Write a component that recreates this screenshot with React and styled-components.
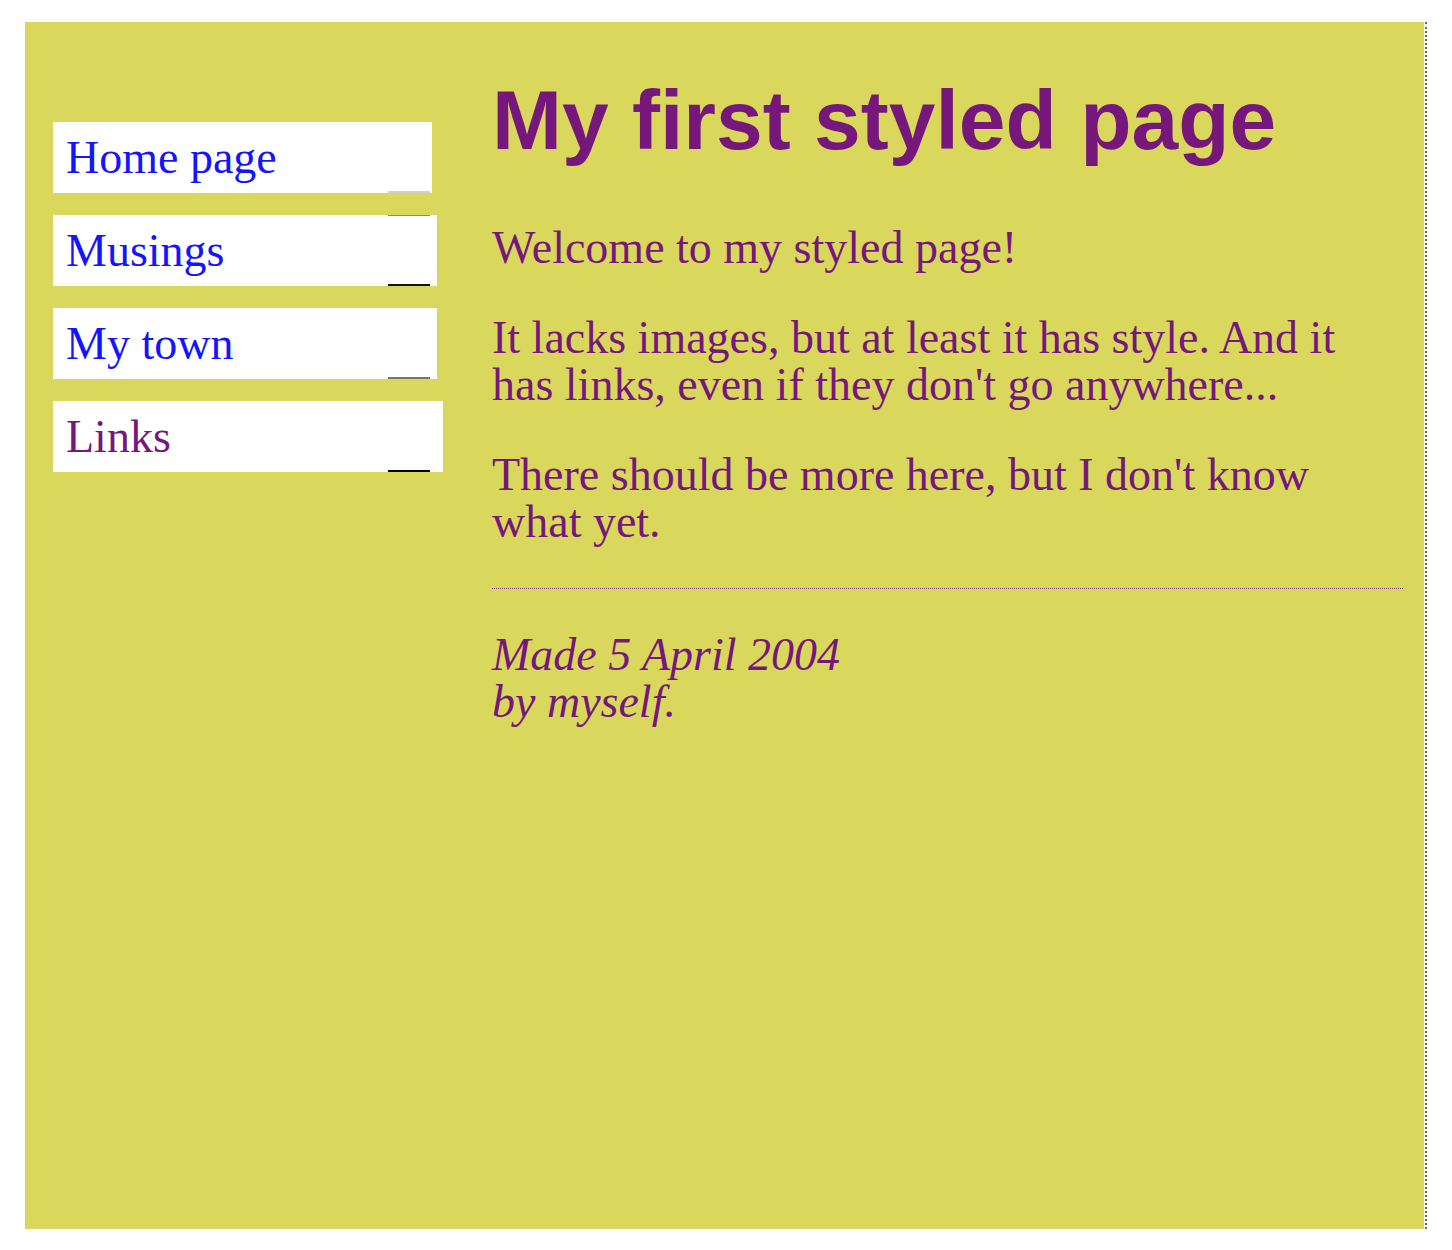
import React from "react";
import styled, { createGlobalStyle } from "styled-components";

const Global = createGlobalStyle`
  html, body {
    margin: 0;
    padding: 0;
    background: #ffffff;
  }
`;

const Frame = styled.div`
  display: flex;
  width: 1402px;
  height: 1207px;
  margin: 22px 0 0 25px;
  border-right: 2px dotted #6a6a6a;
  box-sizing: border-box;
  background: #fbfbf0;
`;

const Page = styled.div`
  display: flex;
  align-items: flex-start;
  width: 1399px;
  height: 100%;
  background: #d9d85c;
  font-family: "Liberation Serif", "Times New Roman", serif;
  color: #76187b;
`;

const Navbar = styled.ul`
  list-style: none;
  margin: 0;
  padding: 100px 0 0 28px;
  width: 467px;
  box-sizing: border-box;
  display: flex;
  flex-direction: column;
  gap: 22px;
`;

const NavItem = styled.li`
  width: ${(p) => p.$width}px;
  height: 71px;
  box-sizing: border-box;
  padding: 12px 13px;
  background-color: #ffffff;
  background-image: linear-gradient(${(p) => p.$bottom}, ${(p) => p.$bottom}),
    linear-gradient(${(p) => p.$top}, ${(p) => p.$top});
  background-repeat: no-repeat;
  background-size: 42px 2px, 42px 1px;
  background-position: 335px 100%, 335px 0;
  font-size: 46px;
  line-height: 47px;
`;

const NavLink = styled.a`
  text-decoration: none;
  color: ${(p) => (p.$visited ? "#76187b" : "#1414ff")};
`;

const Main = styled.main`
  width: 911px;
  display: flex;
  flex-direction: column;
`;

const Title = styled.h1`
  margin: 51px 0 56px;
  font-family: "Liberation Sans", Arial, sans-serif;
  font-weight: bold;
  font-size: 84px;
  line-height: 95px;
  color: #76187b;
`;

const Para = styled.p`
  margin: 0 0 43px;
  padding-right: 40px;
  font-size: 46px;
  line-height: 47px;
`;

const Address = styled.address`
  border-top: 1px dotted #7a3f74;
  padding-top: 42px;
  font-size: 46px;
  line-height: 47px;
  font-style: italic;
`;

const links = [
  { label: "Home page", width: 379, top: "#ffffff", bottom: "#d0d0d0" },
  { label: "Musings", width: 384, top: "#8a8a7a", bottom: "#111111" },
  { label: "My town", width: 384, top: "#ffffff", bottom: "#777766" },
  { label: "Links", width: 390, top: "#ffffff", bottom: "#000000", visited: true },
];

export default function App() {
  return (
    <>
      <Global />
      <Frame>
        <Page>
          <Navbar>
            {links.map((l) => (
              <NavItem key={l.label} $width={l.width} $top={l.top} $bottom={l.bottom}>
                <NavLink href="#" $visited={l.visited}>
                  {l.label}
                </NavLink>
              </NavItem>
            ))}
          </Navbar>
          <Main>
            <Title>My first styled page</Title>
            <Para>Welcome to my styled page!</Para>
            <Para>
              It lacks images, but at least it has style. And it has links, even
              if they don't go anywhere...
            </Para>
            <Para>There should be more here, but I don't know what yet.</Para>
            <Address>
              Made 5 April 2004
              <br />
              by myself.
            </Address>
          </Main>
        </Page>
      </Frame>
    </>
  );
}
